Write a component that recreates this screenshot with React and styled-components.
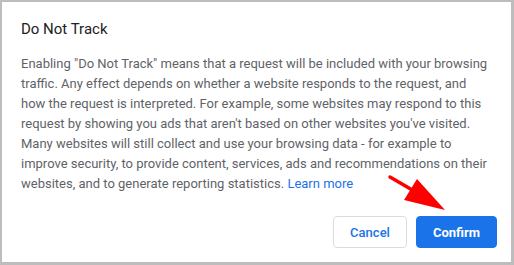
import React from "react";
import styled, { createGlobalStyle } from "styled-components";

const Global = createGlobalStyle`
  html, body { margin: 0; padding: 0; background: #bdbdbd; }
  body { font-family: Roboto, "Liberation Sans", Arial, sans-serif; }
`;

const Frame = styled.div`
  width: 514px;
  height: 265px;
  box-sizing: border-box;
  padding: 2px 3px 3px 2px;
  background: #bdbdbd;
`;

const Dialog = styled.div`
  position: relative;
  height: 100%;
  box-sizing: border-box;
  background: #ffffff;
  padding: 17px 14px 14px 19px;
  display: flex;
  flex-direction: column;
`;

const Title = styled.h1`
  margin: 0;
  font-size: 15px;
  font-weight: 400;
  line-height: 20px;
  color: #202124;
`;

const Body = styled.p`
  margin: 15px 0 0;
  font-size: 13px;
  line-height: 20px;
  color: #5f6368;
  width: 470px;
`;

const Link = styled.a`
  color: #1a73e8;
  text-decoration: none;
`;

const Actions = styled.div`
  margin-top: auto;
  display: flex;
  justify-content: flex-end;
  gap: 9px;
`;

const Button = styled.button`
  height: 32px;
  box-sizing: border-box;
  padding: 0 16px;
  border-radius: 4px;
  font-family: Roboto, "Liberation Sans", Arial, sans-serif;
  font-size: 13px;
  font-weight: ${(p) => (p.$primary ? 700 : 500)};
  border: 1px solid ${(p) => (p.$primary ? "#1a73e8" : "#dadce0")};
  background: ${(p) => (p.$primary ? "#1a73e8" : "#ffffff")};
  color: ${(p) => (p.$primary ? "#ffffff" : "#1a73e8")};
  min-width: ${(p) => (p.$primary ? "79px" : "72px")};
`;

const Arrow = styled.svg`
  position: absolute;
  left: 386px;
  top: 173px;
  width: 64px;
  height: 40px;
  overflow: visible;
`;

export default function App() {
  return (
    <>
      <Global />
      <Frame>
        <Dialog>
          <Title>Do Not Track</Title>
          <Body>
            Enabling "Do Not Track" means that a request will be included with your browsing
            traffic. Any effect depends on whether a website responds to the request, and how
            the request is interpreted. For example, some websites may respond to this request
            by showing you ads that aren't based on other websites you've visited. Many websites
            will still collect and use your browsing data - for example to improve security, to
            provide content, services, ads and recommendations on their websites, and to generate
            reporting statistics. <Link href="#">Learn more</Link>
          </Body>
          <Actions>
            <Button>Cancel</Button>
            <Button $primary>Confirm</Button>
          </Actions>
          <Arrow viewBox="0 0 64 40">
            <line x1="2" y1="2" x2="26" y2="16" stroke="#ff0000" strokeWidth="3.5" strokeLinecap="round" />
            <polygon points="29,4 16,25 57,35" fill="#ff0000" />
          </Arrow>
        </Dialog>
      </Frame>
    </>
  );
}
